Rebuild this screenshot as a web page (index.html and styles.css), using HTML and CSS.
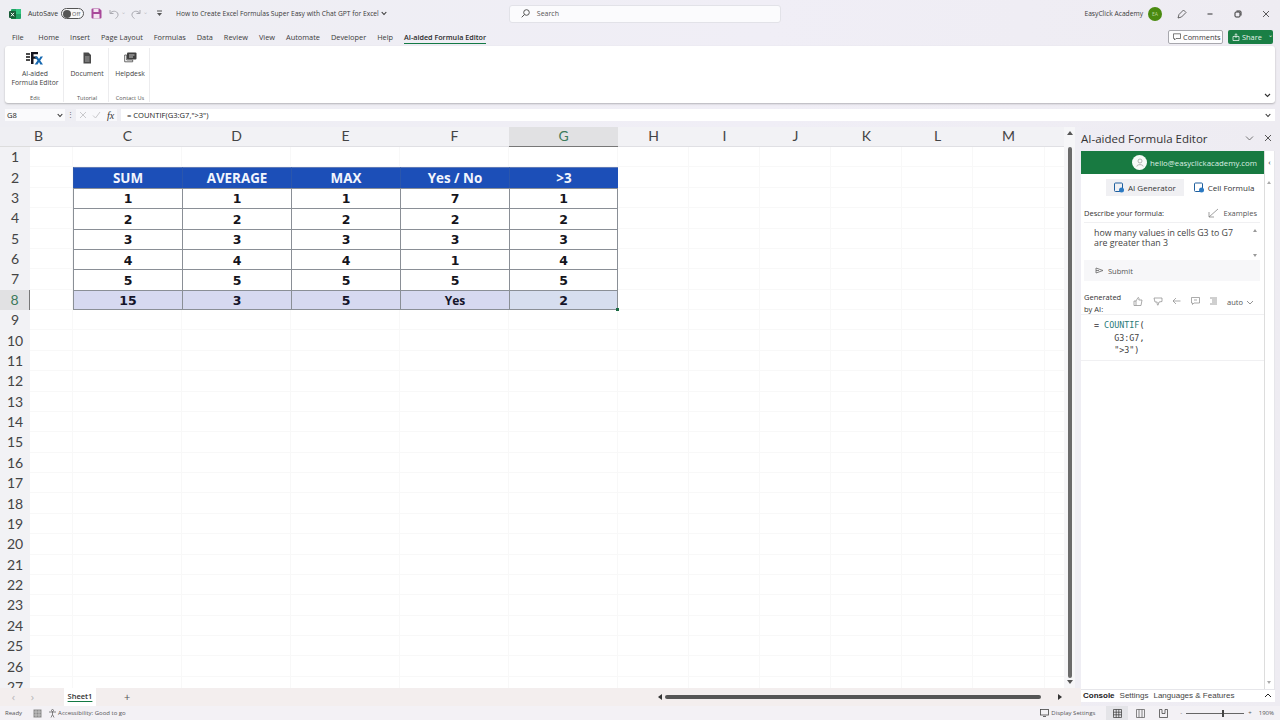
FILE: index.html
```html
<!DOCTYPE html>
<html lang="en">
<head>
<meta charset="utf-8">
<title>How to Create Excel Formulas</title>
<link rel="stylesheet" href="styles.css">
</head>
<body>
<div class="app">
  <header class="titlebar">
    <svg class="xl-logo" width="12" height="12" viewBox="0 0 12 12"><rect x="2" y="1" width="10" height="10" rx="1" fill="#21a366"/><rect x="7" y="1" width="5" height="5" fill="#33c481"/><rect x="2" y="6" width="5" height="5" fill="#107c41"/><rect y="3" width="7" height="7" rx="1" fill="#185c37"/><path d="M2 4.800 5 8.300M5 4.800 2 8.300" stroke="#fff" stroke-width="1"/></svg>
    <span class="autosave">AutoSave</span>
    <span class="toggle"><i class="knob"></i><span>Off</span></span>
    <svg class="save" width="11" height="11" viewBox="0 0 11 11"><path d="M.5 1.500a1 1 0 0 1 1-1h7l2 2v7a1 1 0 0 1-1 1h-8a1 1 0 0 1-1-1z" fill="#a8489a"/><rect x="2.500" y="1" width="5" height="3" fill="#f3e4f1"/><rect x="2.500" y="6" width="6" height="4.400" fill="#f3e4f1"/></svg>
    <svg class="undo" width="10" height="10" viewBox="0 0 10 10" fill="none" stroke="#a9a9b0"><path d="M1 1v3.500h3.500M1.300 4.200C3 1.500 8 1.500 9 5c.4 1.800-1 3.700-2.500 4.500"/></svg>
    <span class="mini">⌄</span>
    <svg class="redo" width="10" height="10" viewBox="0 0 10 10" fill="none" stroke="#a9a9b0"><path d="M9 1v3.500H5.500M8.700 4.200C7 1.500 2 1.500 1 5c-.4 1.800 1 3.700 2.500 4.500"/></svg>
    <span class="mini">⌄</span>
    <svg class="qat" width="7" height="7" viewBox="0 0 7 7"><path d="M1 1h5" stroke="#555"/><path d="M1 3h5L3.500 6z" fill="#555"/></svg>
    <span class="doc-title">How to Create Excel Formulas Super Easy with Chat GPT for Excel</span>
    <svg class="doc-chev" width="6" height="5" viewBox="0 0 6 5" fill="none" stroke="#333" stroke-width="1.100"><path d="M.7 1 3 3.500 5.300 1"/></svg>
    <div class="search">
      <svg width="9" height="9" viewBox="0 0 9 9" fill="none" stroke="#555"><circle cx="5.500" cy="3.500" r="2.800"/><path d="M3.500 5.500 .7 8.300"/></svg>
      <span>Search</span>
    </div>
    <span class="account">EasyClick Academy</span>
    <span class="avatar">EA</span>
    <svg class="pen" width="10" height="10" viewBox="0 0 10 10" fill="none" stroke="#444" stroke-width=".8"><path d="M1 9 2 5.500 6.500 1l2.500 2.500L4.500 8z"/></svg>
    <div class="winctl">
      <svg width="8" height="8" viewBox="0 0 8 8" stroke="#333" fill="none"><path d="M1.500 4h5"/></svg>
      <svg width="8" height="8" viewBox="0 0 8 8" stroke="#333" fill="none"><rect x="1" y="2" width="5" height="5" rx="1"/><path d="M2.500 1H6a1 1 0 0 1 1 1v3.500"/></svg>
      <svg width="8" height="8" viewBox="0 0 8 8" stroke="#333" stroke-width=".8" fill="none"><path d="M1 1l6 6M7 1 1 7"/></svg>
    </div>
  </header>

  <nav class="tabs">
    <span class="tab-file">File</span><span>Home</span><span>Insert</span><span>Page Layout</span><span>Formulas</span><span>Data</span><span>Review</span><span>View</span><span>Automate</span><span>Developer</span><span>Help</span>
    <span class="tab-active">AI-aided Formula Editor</span>
    <div class="tab-actions">
      <button class="comments">
        <svg width="8" height="8" viewBox="0 0 8 8" fill="none" stroke="#444" stroke-width=".7"><path d="M.5.800h7v4.700H3L1.500 7V5.500h-1z"/></svg>Comments</button>
      <button class="share">
        <svg width="8" height="8" viewBox="0 0 8 8" fill="none" stroke="#fff" stroke-width=".7"><path d="M1 3.500h6v4H1zM4 5V1M2.500 2 4 .7 5.500 2"/></svg>Share<i>⌄</i></button>
    </div>
  </nav>

  <section class="ribbon">
    <div class="rgroup g-edit">
      <div class="ritem">
        <svg class="ricon" width="17" height="14" viewBox="0 0 17 14"><path d="M0 3h4M0 6h4M0 9h4" stroke="#111" stroke-width="1.400"/><path d="M5 1h7v2.200H7.500v2.300H11v2.200H7.500V13H5z" fill="#14141f"/><path d="M8.500 5.500h2.800L13 8l1.500-2.500H17l-2.800 3.900 2.800 4.100h-2.700L13 11l-1.500 2.500H8.700l2.800-4.100z" fill="#1668b0"/></svg>
        <span>AI-aided<br>Formula Editor</span>
      </div>
      <em>Edit</em>
    </div>
    <div class="rgroup g-tut">
      <div class="ritem">
        <svg class="ricon" width="10" height="14" viewBox="0 0 10 14"><path d="M1.500 1.500h5l2.500 2.500v8.500h-7.500z" fill="#4a4a4a"/><path d="M3 6h4.500M3 8h4.500M3 10h4.500" stroke="#ccc" stroke-width=".7"/></svg>
        <span>Document</span>
      </div>
      <em>Tutorial</em>
    </div>
    <div class="rgroup g-con">
      <div class="ritem">
        <svg class="ricon" width="13" height="14" viewBox="0 0 13 14"><path d="M.7 4h2v5h6v1.800H.7z" fill="none" stroke="#444" stroke-width=".8"/><rect x="3" y="1.500" width="9.500" height="7" rx="1" fill="#3f3f3f"/><path d="M5 4h5.500M5 6h4" stroke="#fff" stroke-width=".7"/></svg>
        <span>Helpdesk</span>
      </div>
      <em>Contact Us</em>
    </div>
    <svg class="ribbon-chev" width="7" height="5" viewBox="0 0 7 5" fill="none" stroke="#333" stroke-width="1.100"><path d="M1 1l2.500 2.500L6 1"/></svg>
  </section>

  <div class="fbar">
    <div class="namebox"><span>G8</span><svg width="6" height="5" viewBox="0 0 6 5" fill="none" stroke="#333" stroke-width="1.100"><path d="M.7 1 3 3.500 5.300 1"/></svg></div>
    <span class="dots">⋮</span>
    <div class="fx-btns">
      <svg width="8" height="8" viewBox="0 0 8 8" stroke="#c9c9cc" fill="none"><path d="M1 1l6 6M7 1 1 7"/></svg>
      <svg width="9" height="8" viewBox="0 0 9 8" stroke="#c9c9cc" fill="none"><path d="M1 4.500 3.500 7 8 1"/></svg>
      <span class="fx">fx</span>
    </div>
    <div class="finput"><span>= COUNTIF(G3:G7,"&gt;3")</span><svg width="6" height="5" viewBox="0 0 6 5" fill="none" stroke="#333" stroke-width="1.100"><path d="M.7 1 3 3.500 5.300 1"/></svg></div>
  </div>

  <div class="work">
    <div class="left">
      <div class="sheet-wrap">
        <div class="sheet">
          <div class="corner"></div>
          <div class="ch ch-b">B</div><div class="ch">C</div><div class="ch">D</div><div class="ch">E</div><div class="ch">F</div><div class="ch ch-sel">G</div><div class="ch">H</div><div class="ch">I</div><div class="ch">J</div><div class="ch">K</div><div class="ch">L</div><div class="ch">M</div><div class="ch"></div>
          <div class="gridlines"></div>
          <div class="rows">
            <div>1</div><div>2</div><div>3</div><div>4</div><div>5</div><div>6</div><div>7</div><div class="row-sel">8</div><div>9</div><div>10</div><div>11</div><div>12</div><div>13</div><div>14</div><div>15</div><div>16</div><div>17</div><div>18</div><div>19</div><div>20</div><div>21</div><div>22</div><div>23</div><div>24</div><div>25</div><div>26</div><div>27</div>
          </div>
          <div class="data">
            <div class="th">SUM</div><div class="th">AVERAGE</div><div class="th">MAX</div><div class="th">Yes / No</div><div class="th">&gt;3</div>
            <div class="td">1</div><div class="td">1</div><div class="td">1</div><div class="td">7</div><div class="td">1</div>
            <div class="td">2</div><div class="td">2</div><div class="td">2</div><div class="td">2</div><div class="td">2</div>
            <div class="td">3</div><div class="td">3</div><div class="td">3</div><div class="td">3</div><div class="td">3</div>
            <div class="td">4</div><div class="td">4</div><div class="td">4</div><div class="td">1</div><div class="td">4</div>
            <div class="td">5</div><div class="td">5</div><div class="td">5</div><div class="td">5</div><div class="td">5</div>
            <div class="td total">15</div><div class="td total">3</div><div class="td total">5</div><div class="td total word">Yes</div><div class="td total cur">2<i class="handle"></i></div>
          </div>
        </div>
        <div class="vscroll"><b class="up"></b><i></i><b class="down"></b></div>
      </div>
      <div class="sheettabs">
        <span class="nav">‹</span><span class="nav">›</span>
        <span class="sheet1">Sheet1</span>
        <span class="plus">+</span>
        <div class="hscroll"><b class="l"></b><i></i><b class="r"></b></div>
      </div>
    </div>

    <aside class="pane">
      <div class="pane-title">
        <h2>AI-aided Formula Editor</h2>
        <svg width="9" height="7" viewBox="0 0 9 7" fill="none" stroke="#555" stroke-width=".8"><path d="M1 1.500 4.500 5 8 1.500"/></svg>
        <svg width="8" height="8" viewBox="0 0 8 8" fill="none" stroke="#444" stroke-width=".9"><path d="M1 1l6 6M7 1 1 7"/></svg>
      </div>
      <div class="pane-body">
        <div class="pane-main">
          <div class="greenbar">
            <span class="user"><svg width="8" height="9" viewBox="0 0 8 9" fill="none" stroke="#999" stroke-width=".7"><circle cx="4" cy="3" r="2"/><path d="M.8 8.500C1 6 7 6 7.200 8.500"/></svg></span>
            <span>hello@easyclickacademy.com</span>
          </div>
          <div class="modes">
            <span class="mode mode-on"><svg width="10" height="11" viewBox="0 0 10 11"><rect x=".5" y="1" width="8" height="8.500" rx="1" fill="none" stroke="#1e5f9e"/><circle cx="7.500" cy="8" r="2.500" fill="#2b79c2"/></svg>AI Generator</span>
            <span class="mode"><svg width="10" height="11" viewBox="0 0 10 11"><rect x=".5" y="1" width="8" height="8.500" rx="1" fill="none" stroke="#1e5f9e"/><circle cx="7.500" cy="8" r="2.500" fill="#2b79c2"/></svg>Cell Formula</span>
          </div>
          <div class="describe">
            <span>Describe your formula:</span>
            <span class="examples"><svg width="11" height="10" viewBox="0 0 11 10" fill="none" stroke="#777" stroke-width=".7"><path d="M10 1 1 9M1 4v5h5"/></svg>Examples</span>
          </div>
          <div class="prompt">
            <div class="prompt-text">how many values in cells G3 to G7<br>are greater than 3<b class="pt-up"></b><b class="pt-down"></b></div>
            <div class="submit"><svg width="9" height="7" viewBox="0 0 9 7" fill="none" stroke="#666" stroke-width=".8"><path d="M1 1 8 3.500 1 6zM1 3.500h3"/></svg>Submit</div>
          </div>
          <div class="generated">
            <span class="glabel">Generated by AI:</span>
            <div class="gicons">
              <svg width="10" height="9" viewBox="0 0 10 9" fill="none" stroke="#888" stroke-width=".7"><path d="M1 4h2v4.500H1zM3 4l2-3.500c1 0 1.200 1 .8 2.500H9l-1 5.500H3"/></svg>
              <svg width="10" height="9" viewBox="0 0 10 9" fill="none" stroke="#888" stroke-width=".7"><path d="M1 1h8v3.500L6 5 5 8.300C4 8 4 6 4.200 5H2z"/></svg>
              <svg width="9" height="8" viewBox="0 0 9 8" fill="none" stroke="#888" stroke-width=".7"><path d="M8.500 4H1M4 1 1 4l3 3"/></svg>
              <svg width="9" height="8" viewBox="0 0 9 8" fill="none" stroke="#888" stroke-width=".7"><path d="M.5.500h8v5.500H3L1.500 7.500V6h-1zM3 3h3"/></svg>
              <svg width="9" height="9" viewBox="0 0 9 9" fill="none" stroke="#888" stroke-width=".8"><path d="M1 1h7M3 3h5M3 5h5M1 7h7"/></svg>
            </div>
            <span class="auto">auto<svg width="8" height="5" viewBox="0 0 8 5" fill="none" stroke="#666" stroke-width=".7"><path d="M1 1l3 3 3-3"/></svg></span>
          </div>
          <pre class="code"><span class="eq">= </span><span class="fn">COUNTIF</span>(
    <span class="ref">G3:G7</span>,
    <span class="ref">"&gt;3"</span>)</pre>
        </div>
        <div class="pane-scroll"><span class="tab-handle">‹</span><b class="ps-up"></b><b class="ps-down"></b></div>
      </div>
      <div class="pane-foot">
        <b>Console</b><span>Settings</span><span>Languages &amp; Features</span>
        <svg width="8" height="5" viewBox="0 0 8 5" fill="none" stroke="#222" stroke-width="1"><path d="M1 4l3-3 3 3"/></svg>
      </div>
    </aside>
  </div>

  <footer class="status">
    <span>Ready</span>
    <svg class="macro" width="9" height="9" viewBox="0 0 9 9"><rect x=".5" y=".5" width="8" height="8" fill="#8b8b8b"/><path d="M1 3h7M1 6h7M3 1v7M6 1v7" stroke="#ddd" stroke-width=".6"/></svg>
    <span class="a11y"><svg width="9" height="9" viewBox="0 0 9 9" fill="none" stroke="#555" stroke-width=".7"><circle cx="4.500" cy="1.500" r="1"/><path d="M1 3h7M4.500 3v2.500M4.500 5.500 3 8.500M4.500 5.500 6 8.500"/></svg>Accessibility: Good to go</span>
    <div class="status-right">
      <span class="disp"><svg width="9" height="8" viewBox="0 0 9 8" fill="none" stroke="#444" stroke-width=".8"><rect x=".5" y=".5" width="8" height="5.500"/><path d="M3 7.500h3"/></svg>Display Settings</span>
      <span class="view view-on"><svg width="9" height="9" viewBox="0 0 9 9" fill="none" stroke="#333" stroke-width=".7"><path d="M.5.500h8v8h-8zM.5 3.200h8M.5 5.800h8M3.200.5v8M5.800.5v8"/></svg></span>
      <span class="view"><svg width="9" height="9" viewBox="0 0 9 9" fill="none" stroke="#555" stroke-width=".7"><path d="M.5.500h8v8h-8zM3 .5v8M6 .5v8"/></svg></span>
      <span class="view"><svg width="9" height="9" viewBox="0 0 9 9" fill="none" stroke="#333" stroke-width=".7"><path d="M.5 8.500V.5h2.500v4h3v-4h2.500v8z"/></svg></span>
      <span class="zoom-minus">-</span>
      <span class="slider"><i></i></span>
      <span class="zoom-plus">+</span>
      <span class="pct">190%</span>
    </div>
  </footer>
</div>
</body>
</html>
```

FILE: styles.css
```css
* { box-sizing: border-box; }
html, body { margin: 0; padding: 0; }
body {
  width: 1280px; height: 720px; overflow: hidden;
  font-family: "Open Sans", "Liberation Sans", sans-serif;
  color: #333; background: #efeef4;
}
.app {
  width: 1280px; height: 720px; display: flex; flex-direction: column;
  background: linear-gradient(90deg, #eeeef3 0%, #f0eef6 60%, #eeecf2 100%);
}
svg { display: block; flex: none; }

/* title bar */
.titlebar { height: 27px; display: flex; align-items: center; font-size: 7px; padding-left: 9px; flex: none; }
.autosave { margin-left: 7px; font-size: 6.900px; }
.toggle {
  width: 23px; height: 11px; border: 1px solid #555; border-radius: 6px; margin-left: 3px;
  display: flex; align-items: center; padding-left: 1px; gap: 1px; font-size: 5.500px; color: #555; background: #f8f8fa;
}
.knob { width: 8px; height: 8px; border-radius: 50%; background: #555; }
.save { margin-left: 7px; }
.undo { margin-left: 7px; }
.redo { margin-left: 5px; }
.mini { font-size: 6px; color: #c0c0c6; margin-left: 2px; line-height: 6px; margin-top: -3px; }
.qat { margin-left: 8px; }
.doc-title { margin-left: 13px; font-size: 6.700px; white-space: nowrap; color: #3a3a3a; }
.doc-chev { margin-left: 2px; }
.search {
  margin-left: 122px; width: 272px; height: 18px; background: #fbfbfd; border-radius: 3px; border: 1px solid #e2e2e8;
  display: flex; align-items: center; gap: 7px; padding-left: 11px; font-size: 7px; color: #555;
}
.account { margin-left: auto; font-size: 6.700px; color: #3a3a3a; white-space: nowrap; }
.avatar {
  width: 14px; height: 14px; border-radius: 50%; background: #4a8a10; color: #b9d69a;
  margin-left: 5px; font-size: 5px; display: flex; align-items: center; justify-content: center;
}
.pen { margin-left: 15px; }
.winctl { display: flex; gap: 20px; margin-left: 19px; margin-right: 10px; }

/* ribbon tabs */
.tabs { height: 19px; display: flex; align-items: center; gap: 10.900px; padding-left: 12px; font-size: 7.400px; color: #3b3b3b; flex: none; }
.tabs > span { white-space: nowrap; }
.tab-file { margin-right: 3.700px; }
.tab-active { font-weight: 600; color: #2a2a2a; border-bottom: 1px solid #137a45; padding: 1px 0; margin-top: 2px; font-size: 7.200px; }
.tab-actions { margin-left: auto; margin-right: 7px; display: flex; gap: 5px; }
.tabs button { font: inherit; height: 14px; display: flex; align-items: center; gap: 2px; border-radius: 2px; padding: 0 0 0 4px; }
.comments { width: 55px; background: #fdfdfe; border: 1px solid #a8a8ae; color: #3b3b3b; }
.share { width: 45px; background: #1a7f45; border: 0; color: #e6f2ea; }
.share i { font-style: normal; font-size: 6px; margin-left: 4px; margin-top: -4px; }

.ribbon {
  height: 57px; margin: 0 5px; background: #fff; border-radius: 3px; box-shadow: 0 1px 2px rgba(0,0,0,.25);
  display: flex; flex: none; position: relative; font-size: 6.800px; color: #444;
}
.rgroup { display: flex; flex-direction: column; align-items: center; padding: 3px 0 0 2px; height: 54px; margin-top: 2px; border-right: 1px solid #ececee; }
.rgroup em { font-style: normal; font-size: 5.600px; margin-top: auto; color: #555; line-height: 8px; }
.g-edit { width: 59px; }
.g-tut { width: 45px; }
.g-con { width: 41px; }
.ritem { display: flex; flex-direction: column; align-items: center; text-align: center; line-height: 9.300px; }
.ritem span { margin-top: 4px; }
.ribbon-chev { position: absolute; right: 4px; top: 47px; }

/* formula bar */
.fbar { height: 24px; padding: 6px 5px; display: flex; align-items: stretch; flex: none; font-size: 7px; color: #222; }
.namebox { width: 60px; background: #fafafc; display: flex; align-items: center; justify-content: space-between; padding: 0 2px; font-size: 7.600px; }
.dots { width: 11px; text-align: center; color: #666; line-height: 12px; }
.fx-btns { width: 41px; background: #f8f8fb; display: flex; align-items: center; gap: 5px; padding-left: 3px; }
.fx { font-family: "Liberation Serif", serif; font-style: italic; font-size: 10px; color: #333; margin-left: 1px; }
.finput { margin-left: 4px; flex: 1; background: #fff; display: flex; align-items: center; justify-content: space-between; padding: 0 4px 0 6px; font-size: 7.600px; }

/* workspace */
.work { height: 579px; display: flex; flex: none; }
.left { width: 1081px; display: flex; flex-direction: column; }
.sheet-wrap { height: 561px; display: flex; overflow: hidden; background: #fff; }
.sheet {
  width: 1064px; height: 561px; display: grid; overflow: hidden; flex: none;
  grid-template-columns: 30px 43px repeat(5, 109px) repeat(6, 71px) 20px;
  grid-template-rows: 20px repeat(27, 20.380px);
  font-family: "Liberation Sans", sans-serif;
}
.corner { background: #efeff3; border-bottom: 1px solid #ddd; }
.ch {
  background: #f2f2f5; display: flex; align-items: center; justify-content: center; padding-bottom: 3px;
  font-family: "Lato", "Open Sans", sans-serif; font-size: 14px; color: #444; border-bottom: 1px solid #e0e0e4;
}
.ch-b { justify-content: flex-start; padding-left: 4px; }
.ch-sel { background: #e1e1e3; color: #3d7a5b; border-bottom: 1px solid #777; }
.gridlines {
  grid-column: 2 / -1; grid-row: 2 / -1;
  background-image:
    repeating-linear-gradient(180deg, transparent 0, transparent 19.380px, #f8f8f8 19.380px, #f8f8f8 20.380px),
    linear-gradient(90deg, transparent 42px, #f8f8f8 42px, #f8f8f8 43px, transparent 43px, transparent 151px, #f8f8f8 151px, #f8f8f8 152px, transparent 152px, transparent 260px, #f8f8f8 260px, #f8f8f8 261px, transparent 261px, transparent 369px, #f8f8f8 369px, #f8f8f8 370px, transparent 370px, transparent 478px, #f8f8f8 478px, #f8f8f8 479px, transparent 479px, transparent 587px, #f8f8f8 587px, #f8f8f8 588px, transparent 588px, transparent 658px, #f8f8f8 658px, #f8f8f8 659px, transparent 659px, transparent 729px, #f8f8f8 729px, #f8f8f8 730px, transparent 730px, transparent 800px, #f8f8f8 800px, #f8f8f8 801px, transparent 801px, transparent 871px, #f8f8f8 871px, #f8f8f8 872px, transparent 872px, transparent 942px, #f8f8f8 942px, #f8f8f8 943px, transparent 943px, transparent 1014px, #f8f8f8 1014px, #f8f8f8 1015px, transparent 1015px);
}
.rows {
  grid-column: 1; grid-row: 2 / -1; display: grid; grid-template-rows: subgrid; background: #f2f2f5;
  font-family: "Lato", "Open Sans", sans-serif; font-size: 14px; color: #444;
}
.rows > div { display: flex; align-items: center; justify-content: center; padding-bottom: 1px; }
.row-sel { background: #e1e1e3; color: #3d7a5b; border-right: 1px solid #777; }

.data {
  grid-column: 3 / 8; grid-row: 3 / 10; display: grid;
  grid-template-columns: repeat(5, 109px); grid-template-rows: repeat(7, 20.380px);
}
.th, .td { display: flex; align-items: center; justify-content: center; font-weight: 700; position: relative; }
.th { background: #1c4fb8; color: #f2f5fd; font-size: 13.400px; font-family: "Open Sans", "Liberation Sans", sans-serif; border-left: 1px solid #2a56ad; border-top: 1px solid #5f7ab8; }
.td {
  font-family: "DejaVu Sans", sans-serif; font-size: 12.500px; color: #15151c; padding-top: 1px;
  border-left: 1px solid #8a8f96; border-top: 1px solid #8a8f96; background: #fff;
}
.td:nth-child(5n) { border-right: 1px solid #8a8f96; }
.total { background: #d6d9f0; color: #14142a; border-bottom: 1px solid #8a8f96; }
.cur { background: #d6deef; }
.word { font-family: "Open Sans", sans-serif; font-size: 12px; }
.handle { position: absolute; right: -2px; bottom: -2px; width: 3px; height: 3px; background: #1b6b44; }

.vscroll { width: 11px; background: #f6f6f8; display: flex; flex-direction: column; align-items: center; padding: 4px 0; }
.vscroll i { flex: 1; width: 4px; margin: 12px 0 2px; background: #6b6b6b; border-radius: 2px; }
.vscroll .up { border: 3px solid transparent; border-bottom: 4px solid #555; border-top: 0; }
.vscroll .down { border: 3px solid transparent; border-top: 4px solid #555; border-bottom: 0; }
.sheet-wrap::after { content: ""; width: 6px; background: #efeef4; flex: none; }

.sheettabs {
  height: 18px; display: flex; align-items: center; background: #f3eeee; font-size: 7.500px; color: #333;
}
.nav { width: 19px; text-align: center; color: #b5b5b8; font-size: 11px; line-height: 12px; margin-left: 4px; }
.nav + .nav { margin-left: 0; }
.sheet1 { margin-left: 22px; width: 32px; height: 18px; background: #fff; text-align: center; line-height: 16px; font-weight: 600; text-decoration: underline; text-decoration-color: #137a45; text-underline-offset: 2px; }
.plus { margin-left: 28px; font-size: 11px; color: #555; line-height: 12px; }
.hscroll { margin-left: auto; margin-right: 19px; width: 404px; display: flex; align-items: center; gap: 3px; }
.hscroll i { flex: 1; height: 4px; background: #555; border-radius: 2px; }
.hscroll .l { border: 3px solid transparent; border-right: 4px solid #333; border-left: 0; }
.hscroll .r { border: 3px solid transparent; border-left: 4px solid #333; border-right: 0; margin-left: 14px; }

/* task pane */
.pane { width: 199px; display: flex; flex-direction: column; flex: none; font-size: 7.500px; color: #333; }
.pane-title { height: 24px; display: flex; align-items: center; padding-bottom: 2px; flex: none; }
.pane-title h2 { margin: 0; font-weight: 400; font-size: 11.500px; color: #333; white-space: nowrap; width: 164px; }
.pane-title svg:last-child { margin-left: 10px; }
.pane-body { height: 538px; display: flex; flex: none; width: 194px; background: #fff; }
.pane-main { width: 184px; flex: none; border-right: 1px solid #ddd; }
.greenbar { height: 23px; background: #187a41; color: #dcefe3; display: flex; align-items: center; justify-content: flex-end; padding-right: 7px; gap: 3px; font-size: 7.800px; }
.user { width: 15px; height: 15px; border-radius: 50%; background: #f6faf7; display: flex; align-items: center; justify-content: center; }
.modes { display: flex; padding: 5px 0 0 25px; gap: 2px; height: 29px; }
.mode { display: flex; align-items: center; height: 17px; padding: 0 8px; gap: 4px; font-size: 8px; white-space: nowrap; color: #333; }
.mode-on { background: #f0f0f3; font-weight: 500; }
.describe { display: flex; justify-content: space-between; align-items: center; padding: 2px 7px 0 3px; height: 17px; font-size: 7.500px; }
.examples { display: flex; align-items: center; gap: 5px; color: #555; }
.prompt { margin: 2px 4px 0 3px; height: 59px; }
.prompt-text { height: 38px; padding: 5px 14px 0 10px; line-height: 10px; font-size: 8.800px; position: relative; color: #444; border-top: 1px solid #f0f0f2; white-space: nowrap; }
.pt-up, .pt-down { position: absolute; right: 3px; border: 2px solid transparent; }
.pt-up { top: 4px; border-bottom: 3px solid #999; }
.pt-down { bottom: 1px; border-top: 3px solid #999; }
.submit { height: 21px; background: #f7f7f9; display: flex; align-items: center; gap: 4px; padding-left: 11px; font-size: 7.500px; color: #555; }
.generated { display: flex; align-items: center; height: 34px; padding: 7px 2px 0 3px; border-bottom: 1px solid #f0f0f2; }
.glabel { width: 42px; line-height: 12px; font-size: 7.500px; flex: none; margin-top: 3px; }
.gicons { display: flex; gap: 9.500px; align-items: center; margin-left: 7px; }
.auto { display: flex; align-items: center; gap: 3px; margin-left: 9px; font-size: 7.500px; color: #555; margin-top: 2px; }
.code {
  margin: 0; padding: 4px 0 3px 13px; font-family: "DejaVu Sans Mono", "Liberation Mono", monospace; font-size: 8.400px; line-height: 12.500px;
  color: #333; border-bottom: 1px solid #f0f0f2;
}
.fn { color: #2b7a78; }
.ref { color: #444; }
.eq { color: #333; }
.pane-scroll { width: 10px; flex: none; position: relative; border-right: 1px solid #e6e6ea; background: #fff; }
.tab-handle { display: block; height: 23px; line-height: 21px; text-align: center; font-size: 8px; color: #333; }
.ps-up, .ps-down { position: absolute; left: 2px; border: 2px solid transparent; }
.ps-up { top: 28px; border-bottom: 3px solid #aaa; }
.ps-down { bottom: 3px; border-top: 3px solid #aaa; }
.pane-foot { width: 194px; height: 13px; display: flex; align-items: center; gap: 5px; padding: 0 3px 1px 2px; background: #fff; font-size: 8px; font-family: "Liberation Sans", sans-serif; color: #444; border-top: 1px solid #e6e6ea; flex: none; }
.pane-foot b { color: #222; }
.pane-foot svg { margin-left: auto; }

/* status bar */
.status { height: 14px; display: flex; align-items: center; padding-left: 5px; font-size: 6px; color: #555; flex: none; background: #f3f1f5; }
.macro { margin-left: 11px; }
.a11y { display: flex; align-items: center; gap: 1px; margin-left: 6px; }
.status-right { margin-left: auto; display: flex; align-items: center; height: 14px; padding-right: 6px; }
.disp { display: flex; align-items: center; gap: 2px; margin-right: 10px; }
.view { width: 22px; height: 14px; display: flex; align-items: center; justify-content: center; margin-left: 1px; }
.view-on { background: #e4e4e8; }
.zoom-minus { margin-left: 6px; }
.slider { width: 58px; height: 1px; background: #666; margin: 0 4px; display: flex; justify-content: flex-end; align-items: center; padding-right: 20px; }
.slider i { width: 2px; height: 7px; background: #444; }
.pct { margin-left: 7px; }
```
